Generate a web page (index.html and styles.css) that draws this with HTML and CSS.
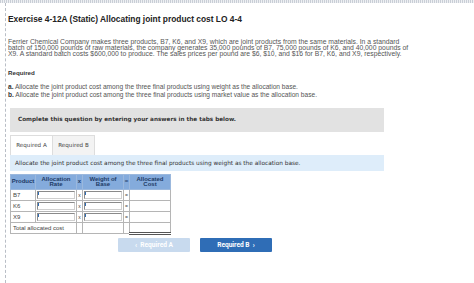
FILE: index.html
```html
<!DOCTYPE html>
<html lang="en">
<head>
    <meta charset="UTF-8">
    <title>Exercise 4-12A (Static) Allocating joint product cost</title>
    <link rel="stylesheet" href="styles.css">
</head>
<body>
    <div class="top-rule"></div>
    <div class="page">
        <h1>Exercise 4-12A (Static) Allocating joint product cost LO 4-4</h1>
        <p class="intro">Ferrier Chemical Company makes three products, B7, K6, and X9, which are joint products from the same materials. In a standard<br>batch of 150,000 pounds of raw materials, the company generates 35,000 pounds of B7, 75,000 pounds of K6, and 40,000 pounds of<br>X9. A standard batch costs $600,000 to produce. The sales prices per pound are $6, $10, and $16 for B7, K6, and X9, respectively.</p>
        <h2>Required</h2>
        <ul class="tasks">
            <li><strong>a.</strong> Allocate the joint product cost among the three final products using weight as the allocation base.</li>
            <li><strong>b.</strong> Allocate the joint product cost among the three final products using market value as the allocation base.</li>
        </ul>

        <div class="notice">Complete this question by entering your answers in the tabs below.</div>

        <div class="tabs">
            <div class="tab active">Required A</div>
            <div class="tab">Required B</div>
        </div>
        <div class="tab-info">Allocate the joint product cost among the three final products using weight as the allocation base.</div>

        <table class="alloc">
            <thead>
                <tr>
                    <th class="col-product">Product</th>
                    <th class="col-num">Allocation<br>Rate</th>
                    <th class="col-op">x</th>
                    <th class="col-num">Weight of<br>Base</th>
                    <th class="col-op">=</th>
                    <th class="col-num">Allocated<br>Cost</th>
                </tr>
            </thead>
            <tbody>
                <tr>
                    <td>B7</td>
                    <td class="entry"><span class="box"></span></td>
                    <td class="op">x</td>
                    <td class="entry"><span class="box"></span></td>
                    <td class="op">=</td>
                    <td></td>
                </tr>
                <tr>
                    <td>K6</td>
                    <td class="entry"><span class="box"></span></td>
                    <td class="op">x</td>
                    <td class="entry"><span class="box"></span></td>
                    <td class="op">=</td>
                    <td></td>
                </tr>
                <tr>
                    <td>X9</td>
                    <td class="entry"><span class="box"></span></td>
                    <td class="op">x</td>
                    <td class="entry"><span class="box"></span></td>
                    <td class="op">=</td>
                    <td></td>
                </tr>
                <tr class="total">
                    <td colspan="2">Total allocated cost</td>
                    <td></td>
                    <td></td>
                    <td></td>
                    <td class="sum"></td>
                </tr>
            </tbody>
        </table>

        <div class="nav">
            <button class="nav-btn prev" disabled>&lsaquo;&nbsp;&nbsp;Required A</button>
            <button class="nav-btn next">Required B&nbsp;&nbsp;&rsaquo;</button>
        </div>
    </div>
</body>
</html>
```

FILE: styles.css
```css
body {
    margin: 0;
    background: #ffffff;
    font-family: "Liberation Sans", Arial, sans-serif;
    color: #333333;
}
.top-rule {
    height: 3px;
    background: repeating-linear-gradient(90deg, #c9ced6 0, #c9ced6 1px, #eef0f3 1px, #eef0f3 2px);
}
.page {
    margin-left: 5px;
    border-left: 1px dashed #b9bec6;
    padding: 11px 0 0 2px;
    height: 269px;
}
h1 {
    margin: 0;
    font-size: 8.4px;
    line-height: 10px;
    color: #222222;
}
.intro {
    margin: 15px 0 0;
    white-space: nowrap;
    font-size: 6.8px;
    line-height: 5.9px;
    color: #555555;
}
h2 {
    margin: 12px 0 0;
    font-size: 6.2px;
    line-height: 7px;
    color: #333333;
}
.tasks {
    list-style: none;
    margin: 7.5px 0 0;
    padding: 0;
    font-size: 6.6px;
    line-height: 8px;
    color: #555555;
}
.tasks strong {
    color: #333333;
}
.notice {
    margin: 9px 0 0 2px;
    width: 366px;
    height: 24px;
    padding-left: 8px;
    background: #e2e2e2;
    font-family: "DejaVu Sans", Verdana, sans-serif;
    font-weight: bold;
    font-size: 5.7px;
    line-height: 22px;
    color: #333333;
}
.tabs {
    display: flex;
    margin: 3px 0 0 2px;
    height: 20px;
}
.tab {
    width: 41px;
    border: 1px solid #dddddd;
    border-bottom: none;
    background: #f3f3f3;
    font-family: "DejaVu Sans", Verdana, sans-serif;
    font-size: 5.6px;
    line-height: 19px;
    text-align: center;
    color: #444444;
}
.tab.active {
    background: #ffffff;
}
.tab + .tab {
    border-left: none;
}
.tab-info {
    margin-left: 2px;
    width: 369px;
    height: 16px;
    padding-left: 5px;
    background: #deedfa;
    font-family: "DejaVu Sans", Verdana, sans-serif;
    font-size: 5.8px;
    line-height: 16px;
    color: #333333;
}
.alloc {
    margin: 3px 0 0 2px;
    border-collapse: collapse;
    font-size: 6px;
    color: #444444;
}
.alloc th {
    background: #84abdc;
    border: 1px solid #9bb8dd;
    color: #1d3a66;
    font-weight: bold;
    line-height: 5.5px;
    height: 14px;
    padding: 0;
}
.alloc td {
    border: 1px solid #b5b5b5;
    height: 10px;
    padding: 0 2px;
    line-height: 9px;
    box-sizing: border-box;
}
.col-product { width: 24px; }
.col-num { width: 40px; }
.col-op { width: 5px; }
.alloc td.entry {
    padding: 1px 1px;
}
.box {
    position: relative;
    display: block;
    height: 6px;
    border: 1px solid #8a8a8a;
    border-right-color: #cfcfcf;
    border-bottom-color: #cfcfcf;
    background: #ffffff;
}
.box::before {
    content: "";
    position: absolute;
    left: 0;
    top: 0;
    width: 1px;
    height: 3px;
    background: #2f6db5;
}
.alloc td.op {
    padding: 0;
    text-align: center;
    font-size: 5px;
}
.alloc tr.total td {
    height: 11px;
}
.alloc td.sum {
    border-bottom: 3px double #555555;
}
.nav {
    display: flex;
    gap: 10px;
    margin: 3px 0 0 110px;
}
.nav-btn {
    width: 72px;
    height: 14px;
    padding: 0;
    border: none;
    border-radius: 1px;
    font-family: "Roboto", "Liberation Sans", sans-serif;
    font-weight: bold;
    font-size: 6.6px;
    color: #ffffff;
}
.nav-btn.prev {
    background: #c8daee;
}
.nav-btn.next {
    background: #2f6db6;
}
```
